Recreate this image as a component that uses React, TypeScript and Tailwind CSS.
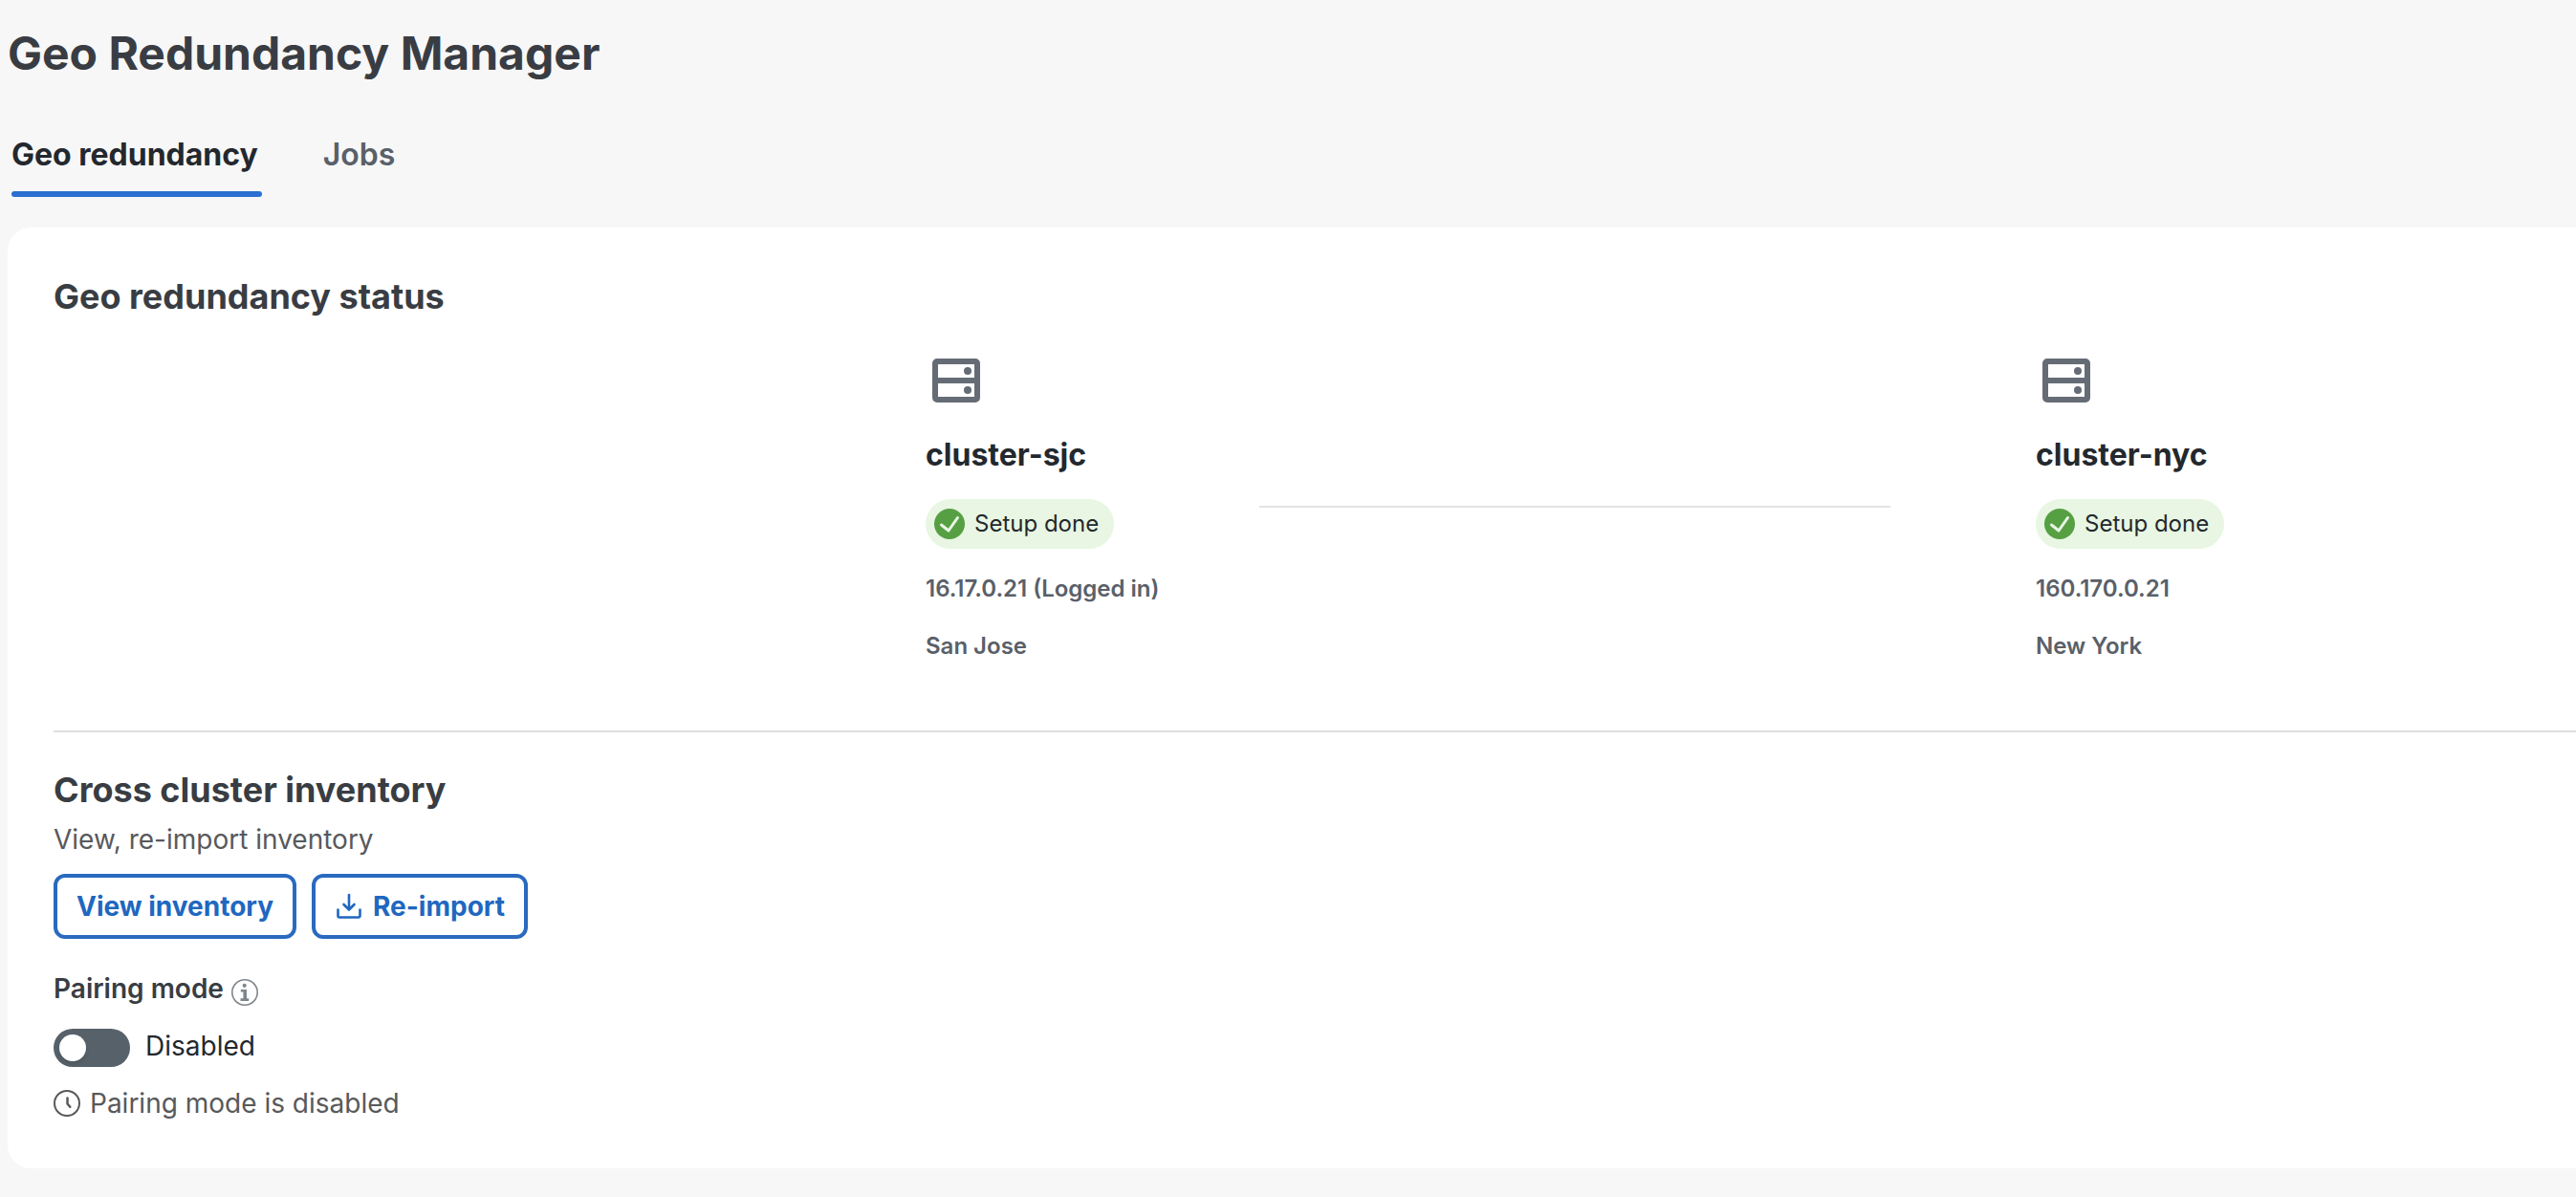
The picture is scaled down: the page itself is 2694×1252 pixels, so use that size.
import { useState } from "react";
import { clsx } from "clsx";

type TabType = "geo" | "jobs";

interface Cluster {
  name: string;
  status: string;
  address: string;
  location: string;
}

const TABS: Array<{ id: TabType; label: string }> = [
  { id: "geo", label: "Geo redundancy" },
  { id: "jobs", label: "Jobs" },
];

const CLUSTERS: Cluster[] = [
  {
    name: "cluster-sjc",
    status: "Setup done",
    address: "16.17.0.21 (Logged in)",
    location: "San Jose",
  },
  {
    name: "cluster-nyc",
    status: "Setup done",
    address: "160.170.0.21",
    location: "New York",
  },
];

function ServerIcon() {
  return (
    <svg viewBox="0 0 64 64" className="size-16 text-[#656c75]" aria-hidden="true">
      <rect x="10" y="12" width="44" height="40" rx="2" fill="none" stroke="currentColor" strokeWidth="6" />
      <path d="M10 32h44" stroke="currentColor" strokeWidth="6" />
      <circle cx="44" cy="22" r="4" fill="currentColor" />
      <circle cx="44" cy="42" r="4" fill="currentColor" />
    </svg>
  );
}

function CheckIcon() {
  return (
    <svg viewBox="0 0 32 32" className="size-8 shrink-0" aria-hidden="true">
      <circle cx="16" cy="16" r="16" fill="#56a043" />
      <path
        d="M7.5 17l7.5 6L24.5 9.5"
        fill="none"
        stroke="#e9f6e4"
        strokeWidth="3"
        strokeLinecap="round"
        strokeLinejoin="round"
      />
    </svg>
  );
}

function ImportIcon() {
  return (
    <svg
      viewBox="0 0 28 28"
      className="size-7 shrink-0"
      fill="none"
      stroke="currentColor"
      strokeWidth="2.6"
      strokeLinecap="round"
      strokeLinejoin="round"
      aria-hidden="true"
    >
      <path d="M15 2v15M9.500 12L15 17.500l5.500-5.500" />
      <path d="M3.500 17.500v6.500a1.500 1.500 0 0 0 1.500 1.500h20a1.500 1.500 0 0 0 1.500-1.500v-6.500" />
    </svg>
  );
}

function InfoIcon() {
  return (
    <svg viewBox="0 0 28 28" className="size-7" fill="#7e868c" aria-hidden="true">
      <circle cx="14" cy="14" r="13.2" fill="none" stroke="#7e868c" strokeWidth="1.6" />
      <circle cx="13.700" cy="6.800" r="2.1" />
      <path d="M9.800 11h6.200v9.300h2.200V23H9.500v-2.700h2.900v-6.700H9.800z" />
    </svg>
  );
}

function ClockIcon() {
  return (
    <svg
      viewBox="0 0 28 28"
      className="size-7 shrink-0"
      fill="none"
      stroke="currentColor"
      strokeWidth="2"
      strokeLinecap="round"
      strokeLinejoin="round"
      aria-hidden="true"
    >
      <circle cx="14" cy="14" r="13" />
      <path d="M14.500 8.500v6l2.800 3.200" strokeWidth="2.5" />
    </svg>
  );
}

function ClusterCard({ cluster }: { cluster: Cluster }) {
  return (
    <div className="flex flex-col items-start gap-6 whitespace-nowrap">
      <ServerIcon />
      <h3 className="text-[32px] leading-[44px] font-bold text-[#23282e]">{cluster.name}</h3>
      <span className="flex items-center gap-2.5 h-[52px] pl-[9px] pr-4 rounded-full bg-[#e8f6e3] text-2xl text-[#23282e]">
        <CheckIcon />
        {cluster.status}
      </span>
      <p className="text-2xl leading-9 font-semibold text-[#596069]">{cluster.address}</p>
      <p className="text-2xl leading-9 font-semibold text-[#596069]">{cluster.location}</p>
    </div>
  );
}

const buttonClass =
  "flex items-center gap-3 h-[68px] px-5 rounded-xl border-4 border-[#2a6abf] bg-white text-[28px] font-bold text-[#2067c0] cursor-pointer";

export default function App() {
  const [activeTab, setActiveTab] = useState<TabType>("geo");
  const [pairing, setPairing] = useState(false);
  const pairingText = pairing ? "enabled" : "disabled";

  return (
    <div className="min-h-screen bg-[#f7f7f7] pl-2 pb-[30px] overflow-x-hidden font-['Inter',sans-serif]">
      <h1 className="pt-6 text-[48px] leading-[64px] font-bold text-[#393d43]">Geo Redundancy Manager</h1>

      <div role="tablist" className="flex gap-16 mt-12 pl-1">
        {TABS.map((tab) => {
          const isActive = activeTab === tab.id;

          return (
            <button
              key={tab.id}
              role="tab"
              aria-selected={isActive}
              onClick={() => setActiveTab(tab.id)}
              className={clsx(
                "flex flex-col gap-3 text-[32px] leading-[52px] cursor-pointer after:h-1.5 after:w-full after:rounded-full",
                isActive
                  ? "font-bold text-[#23282e] after:bg-[#2b70d1]"
                  : "font-semibold text-[#596069] after:bg-transparent"
              )}
            >
              <span className="pr-1">{tab.label}</span>
            </button>
          );
        })}
      </div>

      <main className="mt-8 pl-12 py-12 rounded-l-3xl bg-white">
        <section>
          <h2 className="text-4xl leading-[48px] font-bold text-[#393d43]">Geo redundancy status</h2>
          <div className="grid grid-cols-[912fr_349fr_660fr_152fr_565fr] items-center mt-8">
            <div className="col-start-2 min-w-0">
              <ClusterCard cluster={CLUSTERS[0]} />
            </div>
            <hr className="border-t-2 border-[#e1e5e3]" />
            <div className="col-start-5 min-w-0">
              <ClusterCard cluster={CLUSTERS[1]} />
            </div>
          </div>
        </section>

        <hr className="mt-[70px] border-t-2 border-[#dfdfdf]" />

        <section className="mt-9">
          <h2 className="text-4xl leading-[48px] font-bold text-[#393d43]">Cross cluster inventory</h2>
          <p className="mt-2 text-[28px] leading-10 text-[#58595b]">View, re-import inventory</p>
          <div className="flex gap-4 mt-4">
            <button className={buttonClass}>View inventory</button>
            <button className={buttonClass}>
              <ImportIcon />
              Re-import
            </button>
          </div>
        </section>

        <section className="mt-8">
          <div className="flex gap-2">
            <h3 className="text-[28px] leading-10 font-semibold text-[#393d43]">Pairing mode</h3>
            <button aria-label="About pairing mode" className="mt-2.5 h-7 cursor-pointer">
              <InfoIcon />
            </button>
          </div>
          <label className="flex items-start gap-4 w-fit mt-[22px] text-[28px] leading-9 text-[#23282e] cursor-pointer">
            <input
              type="checkbox"
              role="switch"
              checked={pairing}
              onChange={(e) => setPairing(e.target.checked)}
              className="appearance-none flex items-center w-20 h-10 px-1.5 rounded-full bg-[#57616a] checked:bg-[#2b70d1] checked:justify-end before:size-7 before:rounded-full before:bg-white before:shadow-md cursor-pointer"
            />
            {pairing ? "Enabled" : "Disabled"}
          </label>
          <p className="flex items-center gap-2.5 mt-[18px] text-[28px] leading-10 text-[#58595b]">
            <ClockIcon />
            Pairing mode is {pairingText}
          </p>
        </section>
      </main>
    </div>
  );
}
